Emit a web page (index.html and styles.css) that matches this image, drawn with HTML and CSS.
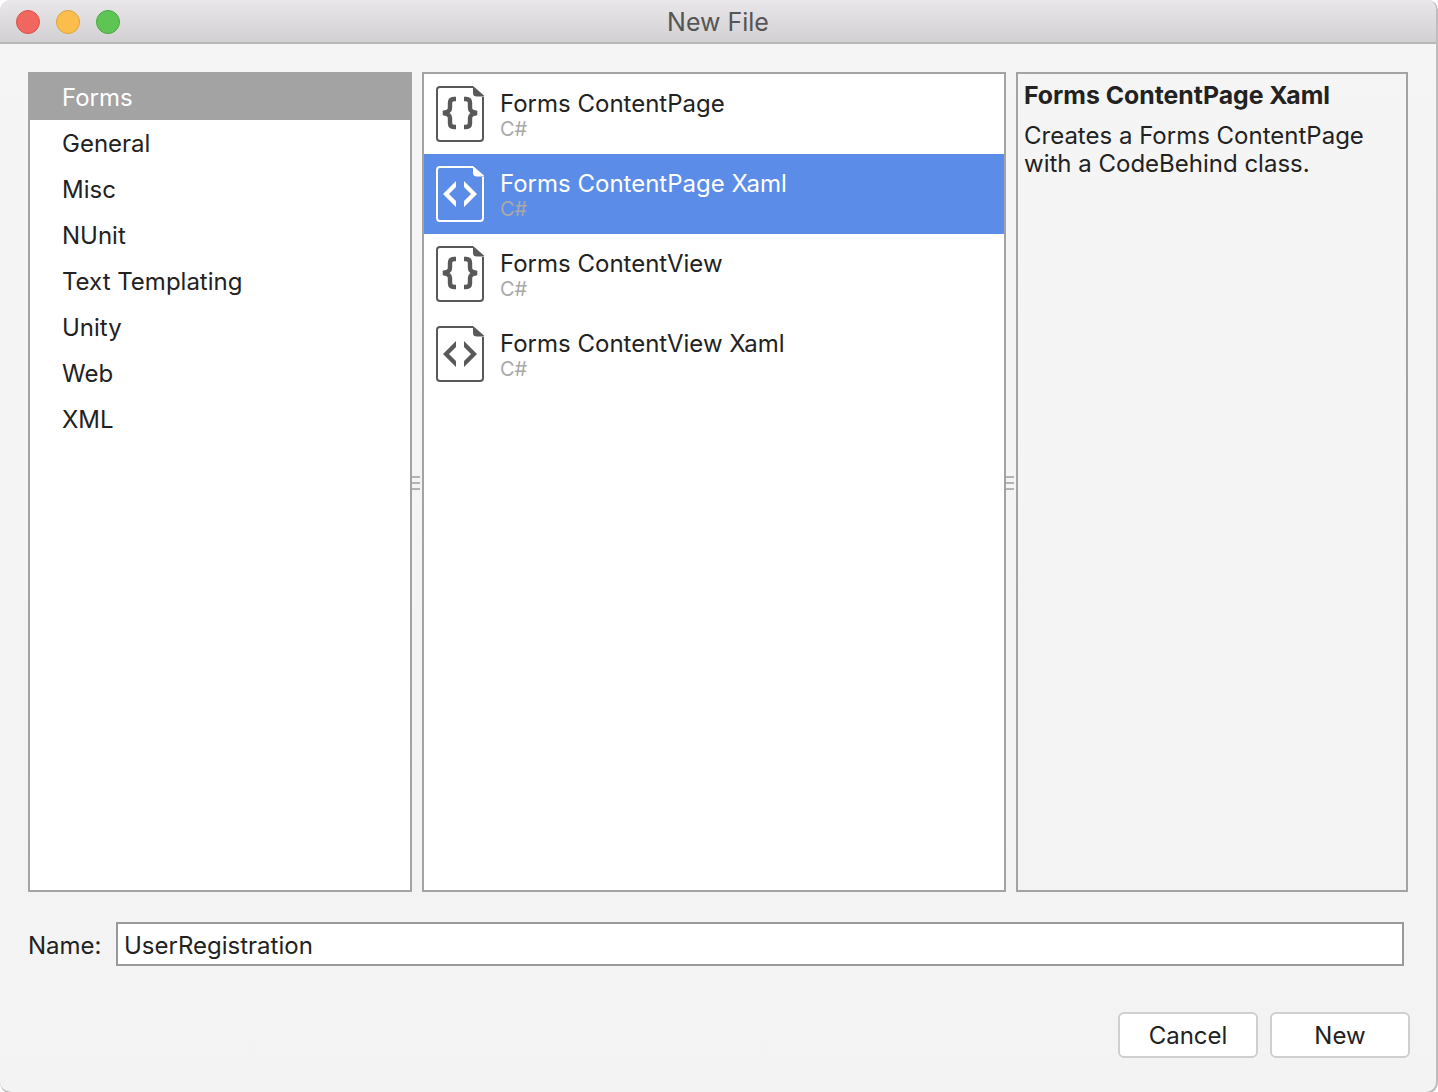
FILE: index.html
```html
<!DOCTYPE html>
<html lang="en">
<head>
<meta charset="utf-8">
<title>New File</title>
<link rel="stylesheet" href="styles.css">
</head>
<body>
<svg class="defs" width="0" height="0" aria-hidden="true">
  <symbol id="doc" viewBox="0 0 48 56">
    <path d="M37 1H4a3 3 0 0 0-3 3v48a3 3 0 0 0 3 3h40a3 3 0 0 0 3-3V11" fill="none" stroke="currentColor" stroke-width="2"/>
    <path d="M37 0L48 9.5V10.5H41Q37 10.5 37 7Z" fill="currentColor"/>
  </symbol>
  <symbol id="braces" viewBox="0 0 48 56">
    <use href="#doc"/>
    <path d="M20 13h-2q-4 0-4 4v5q0 4-7 5q7 1 7 5v5q0 4 4 4h2M28 13h2q4 0 4 4v5q0 4 7 5q-7 1-7 5v5q0 4-4 4h-2" fill="none" stroke="currentColor" stroke-width="4.4"/>
  </symbol>
  <symbol id="angle" viewBox="0 0 48 56">
    <use href="#doc"/>
    <path d="M7 28L20 15V21L13 28L20 35V41ZM41 28L28 15V21L35 28L28 35V41Z" fill="currentColor"/>
  </symbol>
</svg>
<div class="window">
  <header class="titlebar">
    <div class="lights">
      <span class="light red"></span>
      <span class="light yellow"></span>
      <span class="light green"></span>
    </div>
    <div class="title">New File</div>
  </header>
  <main class="content">
    <div class="panes">
      <ul class="pane categories">
        <li class="cat selected">Forms</li>
        <li class="cat">General</li>
        <li class="cat">Misc</li>
        <li class="cat">NUnit</li>
        <li class="cat">Text Templating</li>
        <li class="cat">Unity</li>
        <li class="cat">Web</li>
        <li class="cat">XML</li>
      </ul>
      <div class="splitter"><i></i><i></i><i></i></div>
      <ul class="pane templates">
        <li class="tpl">
          <svg class="icon"><use href="#braces"/></svg>
          <div class="tpl-text"><div class="tpl-name">Forms ContentPage</div><div class="tpl-lang">C#</div></div>
        </li>
        <li class="tpl selected">
          <svg class="icon"><use href="#angle"/></svg>
          <div class="tpl-text"><div class="tpl-name">Forms ContentPage Xaml</div><div class="tpl-lang">C#</div></div>
        </li>
        <li class="tpl">
          <svg class="icon"><use href="#braces"/></svg>
          <div class="tpl-text"><div class="tpl-name">Forms ContentView</div><div class="tpl-lang">C#</div></div>
        </li>
        <li class="tpl">
          <svg class="icon"><use href="#angle"/></svg>
          <div class="tpl-text"><div class="tpl-name">Forms ContentView Xaml</div><div class="tpl-lang">C#</div></div>
        </li>
      </ul>
      <div class="splitter"><i></i><i></i><i></i></div>
      <section class="pane details">
        <h2 class="details-title">Forms ContentPage Xaml</h2>
        <p class="details-text">Creates a Forms ContentPage<br>with a CodeBehind class.</p>
      </section>
    </div>
    <div class="name-row">
      <label class="name-label" for="name">Name:</label>
      <input class="name-input" id="name" type="text" value="UserRegistration">
    </div>
    <div class="actions">
      <button class="btn" type="button">Cancel</button>
      <button class="btn" type="button">New</button>
    </div>
  </main>
</div>
</body>
</html>
```
FILE: styles.css
```css
* { box-sizing: border-box; }
html, body { margin: 0; height: 100%; background: #fff; }
body {
  font-family: Inter, "Liberation Sans", sans-serif;
  font-size: 24px;
  color: #222;
  overflow: hidden;
}
.defs { position: absolute; }
.window {
  width: 1438px;
  height: 1094px;
  display: flex;
  flex-direction: column;
  background: linear-gradient(#f5f5f5, #f3f3f3);
  border-radius: 10px 10px 12px 12px;
  border-right: 2px solid #bdbdbd;
  border-bottom: 2px solid #bdbdbd;
  overflow: hidden;
}
.titlebar {
  position: relative;
  flex: none;
  height: 44px;
  padding-top: 2px;
  background: linear-gradient(#e9e7e9, #d2d0d2);
  border-bottom: 2px solid #b9b8b9;
  display: flex;
  align-items: center;
  justify-content: center;
}
.lights {
  position: absolute;
  left: 16px;
  top: 10px;
  display: flex;
  gap: 16px;
}
.light { width: 24px; height: 24px; border-radius: 50%; border: 1px solid; }
.red { background: #f1665e; border-color: #d9534c; }
.yellow { background: #fbbd4c; border-color: #dfa23b; }
.green { background: #5ec454; border-color: #4ba743; }
.title { color: #555; font-size: 25px; }
.content {
  flex: 1;
  display: flex;
  flex-direction: column;
  padding: 28px 0 0 28px;
}
.panes { display: flex; height: 820px; }
.pane {
  margin: 0;
  padding: 0;
  list-style: none;
  border: 2px solid #a3a3a3;
  background: #fff;
}
.categories { width: 384px; }
.templates { width: 584px; }
.details { width: 392px; background: transparent; padding: 6px; }
.splitter {
  width: 10px;
  padding-top: 2px;
  display: flex;
  flex-direction: column;
  justify-content: center;
  gap: 4px;
}
.splitter i { display: block; width: 8px; height: 2px; background: #b3b3b3; }
.cat {
  height: 46px;
  padding-left: 32px;
  line-height: 48px;
}
.cat.selected {
  height: 48px;
  margin: -2px -2px 0;
  padding-left: 34px;
  line-height: 52px;
  background: #a3a3a3;
  color: #fff;
}
.tpl {
  height: 80px;
  display: flex;
  align-items: center;
  padding-left: 12px;
  gap: 16px;
}
.icon { width: 48px; height: 56px; flex: none; color: #595959; }
.tpl-text { padding-top: 2px; line-height: 28px; }
.tpl-name { height: 28px; }
.tpl-lang { height: 22px; line-height: 22px; font-size: 20px; color: #a9a9a9; }
.tpl.selected { background: #5b8de8; color: #fff; }
.tpl.selected .icon { color: #fff; }
.details-title { margin: 0 0 12px; font-size: 24.8px; line-height: 30px; font-weight: 700; }
.details-text { margin: 0; line-height: 28px; }
.name-row { display: flex; align-items: center; margin-top: 30px; gap: 14px; }
.name-label { width: 74px; padding-top: 2px; }
.name-input {
  width: 1288px;
  height: 44px;
  border: 2px solid #999;
  background: #fff;
  padding: 2px 6px 0;
  font: inherit;
  color: #222;
  outline: none;
  border-radius: 0;
}
.actions { display: flex; gap: 12px; margin-top: 46px; margin-left: 1090px; }
.btn {
  flex: none;
  width: 140px;
  height: 46px;
  background: #fff;
  border: 2px solid #cfcfcf;
  border-radius: 6px;
  font: inherit;
  color: #222;
  padding: 0;
}
```
